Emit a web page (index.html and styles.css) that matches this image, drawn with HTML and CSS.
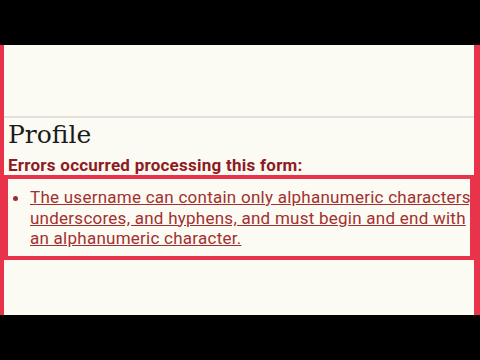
FILE: index.html
```html
<!DOCTYPE html>
<html lang="en">
<head>
<meta charset="utf-8">
<title>Profile</title>
<link rel="stylesheet" href="styles.css">
</head>
<body>
<div class="screen">
  <div class="bar"></div>
  <main class="page">
    <div class="top-space"></div>
    <hr class="rule">
    <h1 class="title">Profile</h1>
    <p class="errors-heading">Errors occurred processing this form:</p>
    <div class="error-box">
      <ul class="error-list">
        <li><a href="#" class="error-link">The username can contain only alphanumeric characters, underscores, and hyphens, and must begin and end with an alphanumeric character.</a></li>
      </ul>
    </div>
  </main>
  <div class="bar"></div>
</div>
</body>
</html>
```
FILE: styles.css
```css
html, body {
  margin: 0;
  padding: 0;
  background: #000;
}
.screen {
  width: 480px;
  height: 360px;
  display: flex;
  flex-direction: column;
  overflow: hidden;
}
.bar {
  height: 45px;
  background: #000;
  flex: none;
}
.page {
  height: 270px;
  flex: none;
  background: #fbfaf3;
  border-left: 4px solid #e8334a;
  border-right: 6px solid #e8334a;
  display: flex;
  flex-direction: column;
}
.top-space {
  height: 71px;
}
.rule {
  margin: 0;
  border: 0;
  height: 2px;
  background: #e2e1dc;
}
.title {
  margin: 0;
  padding: 2px 0 0 4px;
  font-family: "DejaVu Serif", serif;
  font-weight: normal;
  font-size: 25px;
  line-height: 30px;
  color: #1a1a1a;
}
.errors-heading {
  margin: 0;
  padding: 6px 0 0 4px;
  font-family: Roboto, "Liberation Sans", sans-serif;
  font-weight: bold;
  font-size: 17px;
  letter-spacing: 0.25px;
  line-height: 19px;
  color: #8e1b1f;
}
.error-box {
  border: 4px solid #e8334a;
  background: #fbfaf3;
  overflow: hidden;
}
.error-list {
  margin: 0 -8px 0 0;
  padding: 8px 0 7.5px 22px;
  list-style: disc;
  color: #9c2a2e;
  font-family: Roboto, "Liberation Sans", sans-serif;
  font-size: 17px;
  letter-spacing: 0.25px;
  line-height: 20.5px;
}
.error-link {
  color: #a3302f;
  text-decoration: underline;
}
```
